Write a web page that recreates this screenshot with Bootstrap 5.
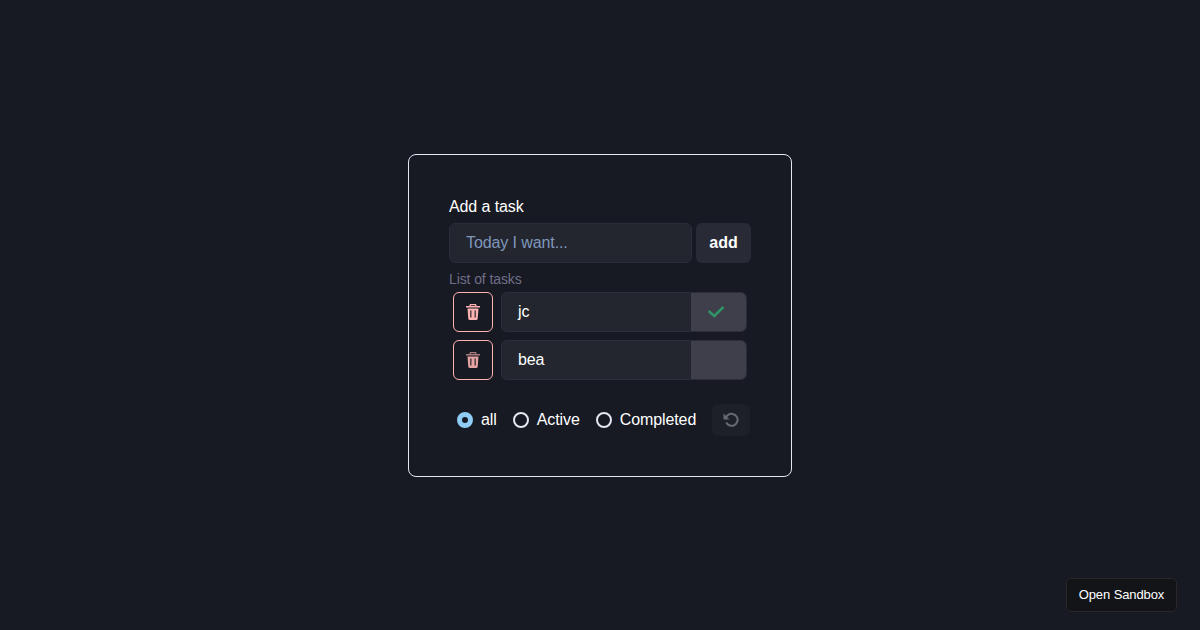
<!DOCTYPE html>
<html lang="en">
<head>
    <meta charset="UTF-8">
    <title>Todo</title>
    <link href="https://cdn.jsdelivr.net/npm/bootstrap@5.3.3/dist/css/bootstrap.min.css" rel="stylesheet">
    <style>
        body {
            background-color: #171923;
            color: #fff;
            font-family: "Liberation Sans", Arial, sans-serif;
            font-size: 16px;
            letter-spacing: -0.1px;
            min-height: 100vh;
        }

        .todo-panel {
            width: 384px;
            height: 323px;
            margin-top: 1px;
            padding: 39px 40px 0;
            border: 1px solid #e2e8f0;
            border-radius: 8px;
        }

        .add-label {
            line-height: 24px;
            padding-top: 1px;
            margin-bottom: 4px;
        }

        .field-box {
            height: 40px;
            background-color: #23262f;
            border: 1px solid #2b2e38;
            border-radius: 6px;
            color: #fff;
            letter-spacing: -0.1px;
            padding: 0 16px;
        }

        .field-box::placeholder {
            color: #8096bb;
            opacity: 1;
        }

        .field-box:focus {
            background-color: #23262f;
            border-color: #2b2e38;
            box-shadow: none;
            color: #fff;
        }

        .add-input {
            width: 243px;
        }

        .add-btn {
            width: 55px;
            height: 40px;
            background-color: #282b35;
            border: 0;
            border-radius: 6px;
            color: #fff;
            font-weight: 700;
        }

        .list-title {
            color: #6f6f88;
            font-size: 14px;
            line-height: 16px;
            margin: 8px 0 5px;
        }

        .task-rows {
            padding-left: 4px;
        }

        .trash-btn {
            width: 40px;
            height: 40px;
            background: transparent;
            border: 1px solid #feb2b2;
            border-radius: 6px;
            padding: 0;
        }

        .task-field {
            width: 246px;
            height: 40px;
            background-color: #23262f;
            border: 1px solid #2b2e38;
            border-radius: 6px;
            overflow: hidden;
        }

        .task-name {
            padding-left: 16px;
        }

        .check-box {
            width: 55px;
            padding-right: 6px;
            background-color: #3e3f4a;
        }

        .filter-row {
            margin-top: 24px;
            padding-left: 8px;
            width: 301px;
        }

        .radio-dot {
            width: 16px;
            height: 16px;
            border: 2px solid #e2e8f0;
            border-radius: 50%;
            flex: none;
        }

        .radio-dot.is-on {
            border: 5px solid #90cdf4;
            background-color: #171923;
        }

        .reset-btn {
            width: 38px;
            height: 32px;
            background-color: #1e2029;
            border: 0;
            border-radius: 6px;
            padding: 0;
        }

        .sandbox-btn {
            position: fixed;
            right: 23px;
            bottom: 18px;
            width: 111px;
            height: 34px;
            background-color: #131417;
            border: 1px solid #2b2629;
            border-radius: 5px;
            color: #fff;
            font-size: 13px;
            letter-spacing: -0.1px;
            padding: 0;
        }
    </style>
</head>
<body class="d-flex align-items-center justify-content-center">
<div class="todo-panel">
    <div class="add-label">Add a task</div>
    <div class="d-flex gap-1">
        <input class="form-control field-box add-input" placeholder="Today I want...">
        <button class="add-btn">add</button>
    </div>
    <div class="list-title">List of tasks</div>
    <div class="task-rows d-flex flex-column gap-2">
        <div class="d-flex gap-2">
            <button class="trash-btn d-flex align-items-center justify-content-center">
                <svg width="16" height="16" viewBox="0 0 16 16">
                    <path fill="#feb2b2" d="M4.500 2V1.200C4.500.5 5 0 5.700 0h4.600c.7 0 1.200.5 1.200 1.200V2H15v1.500H1V2zm1.300 0h4.400v-.8H5.800z"/>
                    <path fill="#feb2b2" d="M2.500 4.500h11l-.8 10.300c0 .7-.6 1.200-1.300 1.200H4.600c-.7 0-1.300-.5-1.300-1.200zM5.300 6.500v7h1.100v-7zm4.300 0v7h1.100v-7z"/>
                </svg>
            </button>
            <div class="task-field d-flex">
                <div class="task-name flex-grow-1 d-flex align-items-center">jc</div>
                <div class="check-box d-flex align-items-center justify-content-center">
                    <svg width="16" height="16" viewBox="0 0 16 16" fill="none" stroke="#2f9467" stroke-width="2.500"><path d="M.6 7 6.300 12 15.400 3"/></svg>
                </div>
            </div>
        </div>
        <div class="d-flex gap-2">
            <button class="trash-btn d-flex align-items-center justify-content-center">
                <svg width="16" height="16" viewBox="0 0 16 16">
                    <path fill="#a87a7d" d="M4.500 2V1.200C4.500.5 5 0 5.700 0h4.600c.7 0 1.200.5 1.200 1.200V2H15v1.500H1V2zm1.300 0h4.400v-.8H5.800z"/>
                    <path fill="#e5a3a3" d="M2.500 4.500h11l-.8 10.300c0 .7-.6 1.200-1.300 1.200H4.600c-.7 0-1.300-.5-1.300-1.200zM5.300 6.500v7h1.100v-7zm4.300 0v7h1.100v-7z"/>
                </svg>
            </button>
            <div class="task-field d-flex">
                <div class="task-name flex-grow-1 d-flex align-items-center">bea</div>
                <div class="check-box"></div>
            </div>
        </div>
    </div>
    <div class="filter-row d-flex align-items-center gap-3">
        <div class="d-flex align-items-center gap-2"><span class="radio-dot is-on"></span>all</div>
        <div class="d-flex align-items-center gap-2"><span class="radio-dot"></span>Active</div>
        <div class="d-flex align-items-center gap-2"><span class="radio-dot"></span>Completed</div>
        <button class="reset-btn ms-auto d-flex align-items-center justify-content-center">
            <svg width="16" height="16" viewBox="0 0 16 16" fill="none" stroke="#666a73" stroke-width="2"><path d="M3.200 10.500A6 6 0 1 0 5 3L2.500 5.300"/><path fill="#666a73" stroke="none" d="M.5 1.500v6h6z"/></svg>
        </button>
    </div>
</div>
<button class="sandbox-btn">Open Sandbox</button>
<script src="https://cdn.jsdelivr.net/npm/bootstrap@5.3.3/dist/js/bootstrap.bundle.min.js"></script>
</body>
</html>
